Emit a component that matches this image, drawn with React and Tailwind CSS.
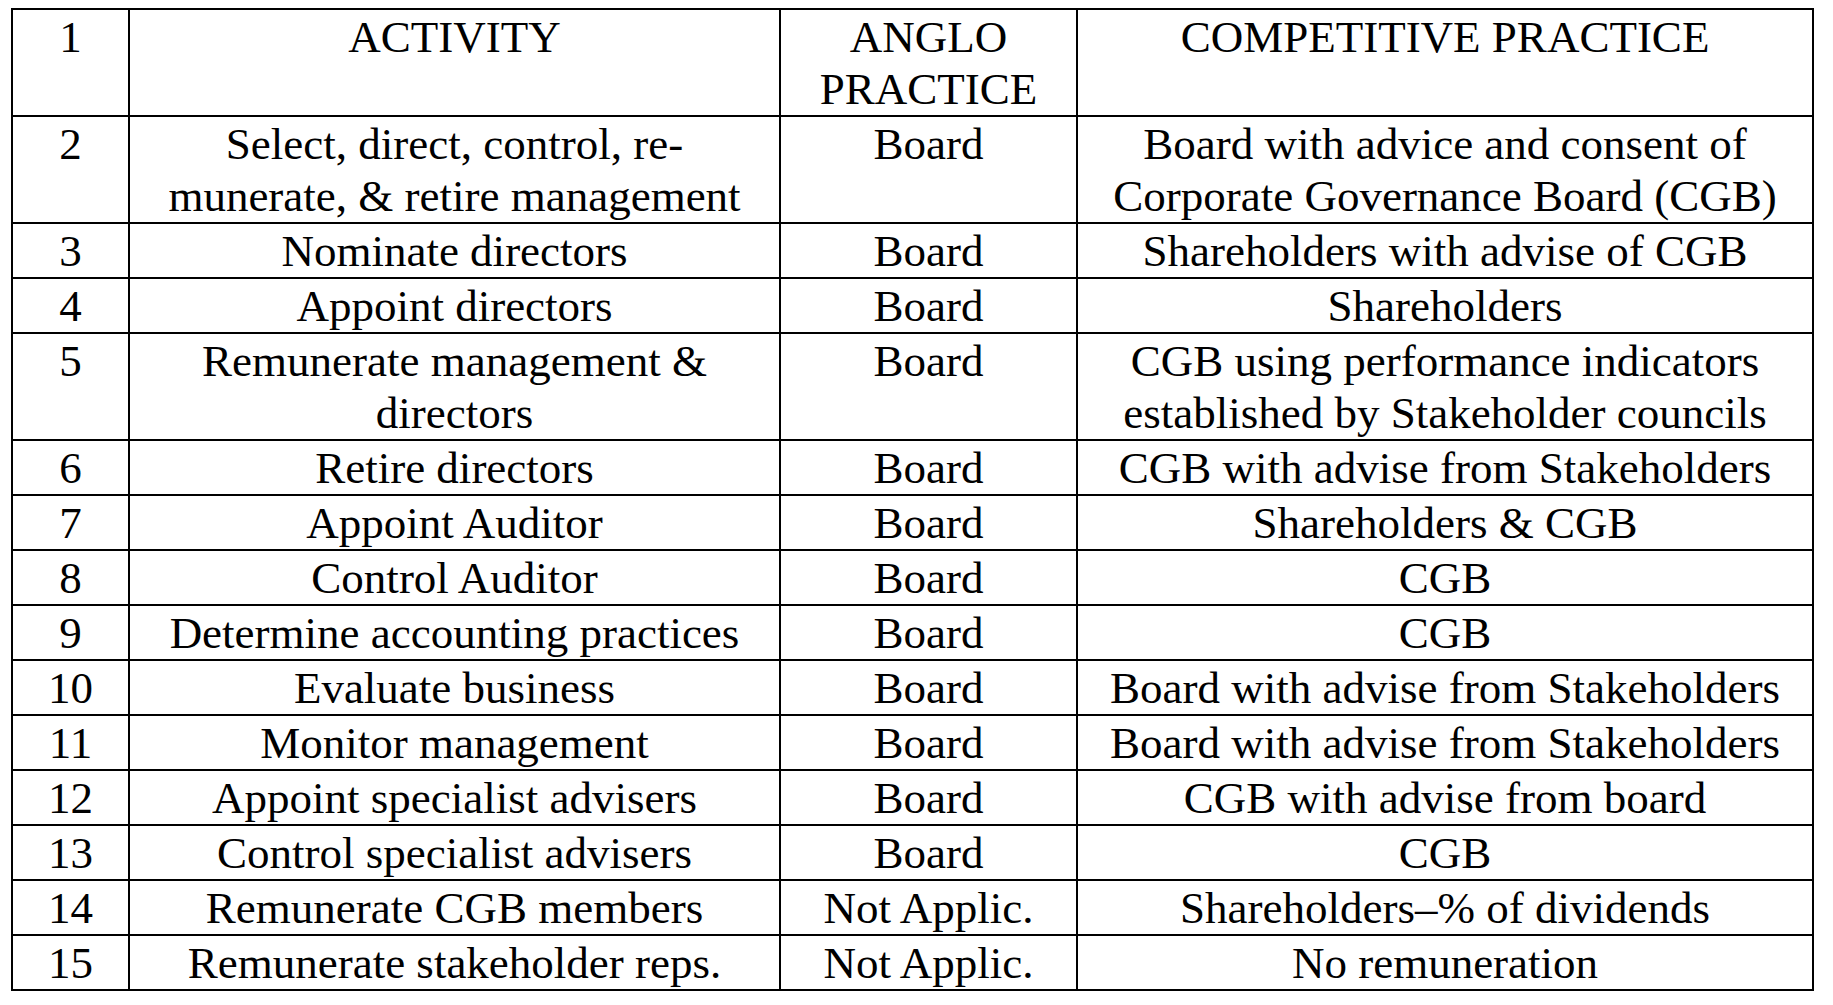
import React from "react";

const rows = [
  ["2", ["Select, direct, control, re-", "munerate, & retire management"], ["Board"], ["Board with advice and consent of", "Corporate Governance Board (CGB)"]],
  ["3", ["Nominate directors"], ["Board"], ["Shareholders with advise of CGB"]],
  ["4", ["Appoint directors"], ["Board"], ["Shareholders"]],
  ["5", ["Remunerate management &", "directors"], ["Board"], ["CGB using performance indicators", "established by Stakeholder councils"]],
  ["6", ["Retire directors"], ["Board"], ["CGB with advise from Stakeholders"]],
  ["7", ["Appoint Auditor"], ["Board"], ["Shareholders & CGB"]],
  ["8", ["Control Auditor"], ["Board"], ["CGB"]],
  ["9", ["Determine accounting practices"], ["Board"], ["CGB"]],
  ["10", ["Evaluate business"], ["Board"], ["Board with advise from Stakeholders"]],
  ["11", ["Monitor management"], ["Board"], ["Board with advise from Stakeholders"]],
  ["12", ["Appoint specialist advisers"], ["Board"], ["CGB with advise from board"]],
  ["13", ["Control specialist advisers"], ["Board"], ["CGB"]],
  ["14", ["Remunerate CGB members"], ["Not Applic."], ["Shareholders–% of dividends"]],
  ["15", ["Remunerate stakeholder reps."], ["Not Applic."], ["No remuneration"]],
];

const Lines = ({ lines }) =>
  lines.map((l, i) => (
    <React.Fragment key={i}>
      {i > 0 && <br />}
      {l}
    </React.Fragment>
  ));

const cell = "border-2 border-black align-top text-center pt-[1px] pb-0 px-0 whitespace-nowrap";

const App = () => {
  return (
    <div className="w-[1833px] h-[1005px] bg-white overflow-hidden pl-[11px] pt-[8px]">
      <table className="table-fixed border-collapse text-black text-[45px] leading-[52px] font-['Liberation_Serif','Times_New_Roman',serif]">
        <colgroup>
          <col className="w-[117px]" />
          <col className="w-[651px]" />
          <col className="w-[297px]" />
          <col className="w-[736px]" />
        </colgroup>
        <tbody>
          <tr>
            <td className={cell}>1</td>
            <td className={cell}>ACTIVITY</td>
            <td className={cell}>
              ANGLO
              <br />
              PRACTICE
            </td>
            <td className={cell}>COMPETITIVE PRACTICE</td>
          </tr>
          {rows.map(([n, act, anglo, comp]) => (
            <tr key={n}>
              <td className={cell}>{n}</td>
              <td className={cell}>
                <Lines lines={act} />
              </td>
              <td className={cell}>
                <Lines lines={anglo} />
              </td>
              <td className={cell}>
                <Lines lines={comp} />
              </td>
            </tr>
          ))}
        </tbody>
      </table>
    </div>
  );
};

export default App;
